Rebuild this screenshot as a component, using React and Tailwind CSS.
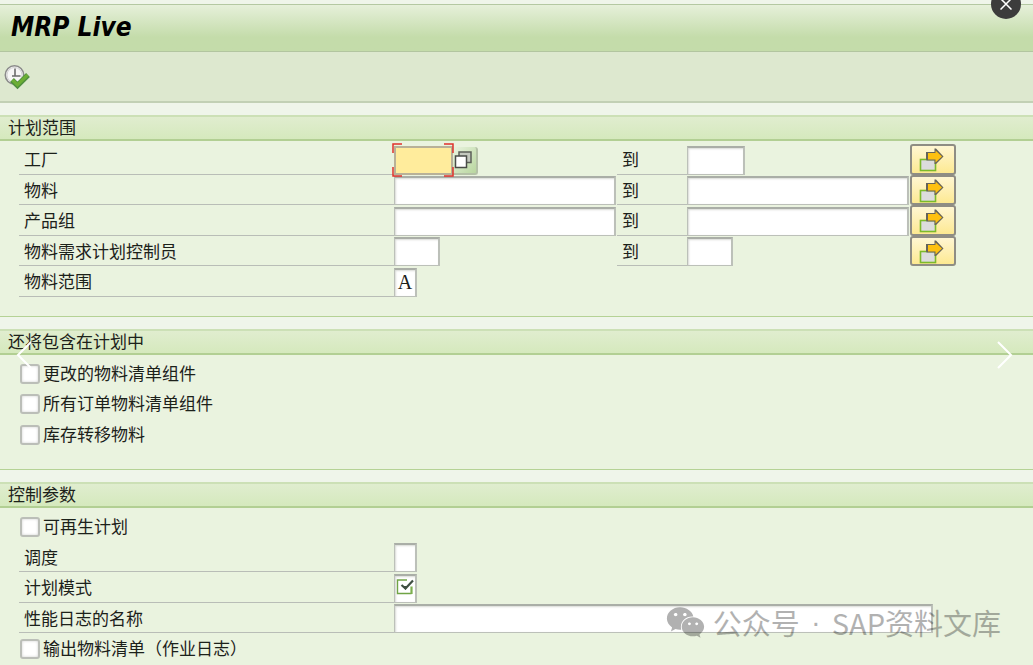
import { useState } from 'react';
import { FaWeixin } from 'react-icons/fa';

const ROW = 'flex h-[30px] items-end pl-[19px] odd:h-[31px]';
const FIELD =
    'h-[29px] border border-t-2 border-r-2 border-[#bcc0b9] border-t-[#aaaea7] bg-white shadow-[inset_1px_1px_2px_#d8dad6] outline-none';

const rangeRows = [
    { id: 'plant', label: '工厂', kind: 'plant' },
    { id: 'material', label: '物料', width: 'w-[222px]' },
    { id: 'group', label: '产品组', width: 'w-[222px]' },
    { id: 'controller', label: '物料需求计划控制员', width: 'w-[46px]' },
];

const includeOptions = ['更改的物料清单组件', '所有订单物料清单组件', '库存转移物料'];

function ExecuteIcon() {
    return (
        <svg className="h-[26px] w-[26px]" viewBox="0 0 26 26" fill="none">
            <circle cx="10.5" cy="11" r="9.2" fill="#f7f7f7" stroke="#8a8a8a" strokeWidth="1.6" />
            <circle cx="10.5" cy="11" r="7.5" stroke="#d2d2d2" />
            <path d="M11 4.5v8M8 12h8.5" stroke="#6c6c6c" strokeWidth="1.6" />
            <path d="M8 16l5.500 5.500L24 11" stroke="#4f8f3f" strokeWidth="5.4" />
            <path d="M8.5 16l5 4.800L23.5 11" stroke="#6cae34" strokeWidth="3.2" />
        </svg>
    );
}

function MultiSelectIcon() {
    return (
        <svg className="h-[25px] w-[26px]" viewBox="0 0 26 25" fill="none">
            <rect x="1.5" y="11.5" width="15" height="11" fill="#dcdcdc" stroke="#7cba2a" strokeWidth="1.6" />
            <path d="M7 4h8.5V.5h1.500L24.500 8.500 17 16h-1.500v-3.500H7.500L7 11z" fill="#65635a" />
            <path d="M9 5h7.500V2.500L23 8.500l-6.500 6v-3H9z" fill="#fdc010" />
        </svg>
    );
}

function CopyIcon() {
    return (
        <svg className="h-[18px] w-[18px]" viewBox="0 0 18 18">
            <path d="M5 1h12v10.5h-12z" fill="#c3c8be" stroke="#5c5f58" strokeWidth="1.5" />
            <path d="M1.5 5h11v11.5h-11z" fill="#fff" stroke="#4a4c48" strokeWidth="1.5" />
        </svg>
    );
}

function CheckedBoxIcon() {
    return (
        <svg className="h-[18px] w-[18px]" viewBox="0 0 18 18" fill="none">
            <path d="M11 2h-9.5v13.5h14" stroke="#70a445" strokeWidth="1.4" />
            <path d="M15.5 8.5v7.5" stroke="#7db04f" strokeWidth="2.2" />
            <path d="M5.5 7l4 3.5L17 2.5" stroke="#3f4f42" strokeWidth="2.2" />
            <path d="M6.5 8h5l-2 4z" fill="#3f4f42" />
        </svg>
    );
}

function Section({ title, children }) {
    return (
        <section className="mb-3 border-b border-[#b5d295] bg-[#eaf3df] pb-[19px]">
            <h2 className="flex h-[26px] items-center border-t-2 border-b-2 border-t-[#cce0b6] border-b-[#b2cf93] bg-linear-to-b from-[#e0edcf] to-[#d5e9bd] pb-[3px] pl-2">
                {title}
            </h2>
            <div className="pt-[3px]">{children}</div>
        </section>
    );
}

function RowLabel({ htmlFor, children }) {
    return (
        <label htmlFor={htmlFor} className="flex h-full w-[375px] shrink-0 items-center border-b border-[#b9bdb7] pl-[5px]">
            {children}
        </label>
    );
}

function CheckRow({ label }) {
    return (
        <div className={ROW}>
            <label className="flex h-full items-center gap-[3px] pl-px">
                <input
                    type="checkbox"
                    className="h-5 w-5 appearance-none rounded-[3px] border-2 border-[#bbbeb8] bg-white shadow-[inset_0_0_3px_#d0d0d0] checked:bg-[#70a445]"
                />
                <span className="pb-[2px]">{label}</span>
            </label>
        </div>
    );
}

function RangeRow({ id, label, kind, width }) {
    return (
        <div className={ROW}>
            <RowLabel htmlFor={id}>{label}</RowLabel>
            <div className="flex w-[223px] shrink-0 items-end">
                {kind === 'plant' ? (
                    <>
                        <div className="relative">
                            <input
                                id={id}
                                className="block h-[29px] w-[59px] border-2 border-[#b8b198] bg-[#ffec9c] px-1 outline-none"
                            />
                            {/* focus corners */}
                            <svg className="pointer-events-none absolute -top-[3px] -left-[2px] h-[34px] w-[62px]" viewBox="0 0 62 34" fill="none">
                                <path d="M1 10V1h9M52 1h9v9M61 24v9h-9M10 33H1v-9" stroke="#e0322c" strokeWidth="1.5" />
                            </svg>
                        </div>
                        <button
                            type="button"
                            aria-label="搜索帮助"
                            className="flex h-[28px] w-[25px] items-center justify-center rounded-r-[3px] border-r-2 border-b-2 border-[#b4c1a6] bg-linear-to-br from-[#e9f3df] to-[#b9d69f] pr-1"
                        >
                            <CopyIcon />
                        </button>
                    </>
                ) : (
                    <input id={id} className={`${FIELD} ${width} px-1`} />
                )}
            </div>
            <label htmlFor={`${id}-to`} className="flex h-full w-[70px] shrink-0 items-center border-b border-[#b9bdb7] pl-[5px]">
                到
            </label>
            <div className="flex w-[223px] shrink-0 items-end">
                <input id={`${id}-to`} className={`${FIELD} px-1 ${kind === 'plant' ? 'w-[58px]' : width}`} />
            </div>
            <button
                type="button"
                aria-label="多项选择"
                className="flex h-full w-[46px] shrink-0 items-center justify-center rounded-[3px] border-2 border-[#8f8d84] bg-linear-to-b from-[#fff6d2] to-[#fde991] pt-[2px] pr-[2px]"
            >
                <MultiSelectIcon />
            </button>
        </div>
    );
}

export default function App() {
    const [scope, setScope] = useState('A');

    return (
        <div className="relative min-h-screen overflow-hidden bg-[#eff5ea] pt-1 font-['Noto_Sans_CJK_SC',sans-serif] text-[17px] leading-6 text-[#1c211a]">
            <header className="flex h-12 items-center border-t border-b border-t-[#b4c8a2] border-b-[#b2c5a0] bg-linear-to-b from-[#e6f0da] to-[#c4dcaa] to-70% pb-[3px] pl-[11px]">
                <h1 className="font-['DejaVu_Sans_Condensed','DejaVu_Sans',sans-serif] text-[26px] font-bold text-black italic">
                    MRP Live
                </h1>
            </header>
            <div className="mb-3 flex h-[51px] items-center border-b-2 border-[#c2d0b5] bg-[#dde8cf] pl-1">
                <button type="button" aria-label="执行">
                    <ExecuteIcon />
                </button>
            </div>

            <main>
                <Section title="计划范围">
                    {rangeRows.map((row) => (
                        <RangeRow key={row.id} {...row} />
                    ))}
                    <div className={ROW}>
                        <RowLabel htmlFor="scope">物料范围</RowLabel>
                        <input
                            id="scope"
                            value={scope}
                            onChange={(e) => setScope(e.target.value)}
                            className={`${FIELD} w-[23px] pb-[2px] text-center font-['Liberation_Serif',serif] text-xl`}
                        />
                    </div>
                </Section>

                <Section title="还将包含在计划中">
                    {includeOptions.map((label) => (
                        <CheckRow key={label} label={label} />
                    ))}
                </Section>

                <Section title="控制参数">
                    <CheckRow label="可再生计划" />
                    <div className={ROW}>
                        <RowLabel htmlFor="scheduling">调度</RowLabel>
                        <input id="scheduling" className={`${FIELD} w-[23px]`} />
                    </div>
                    <div className={ROW}>
                        <RowLabel htmlFor="mode">计划模式</RowLabel>
                        <button id="mode" type="button" className={`${FIELD} flex w-[23px] items-center justify-center pb-1`}>
                            <span className="shrink-0">
                                <CheckedBoxIcon />
                            </span>
                        </button>
                    </div>
                    <div className={ROW}>
                        <RowLabel htmlFor="log-name">性能日志的名称</RowLabel>
                        <input id="log-name" className={`${FIELD} w-[539px] px-1`} />
                    </div>
                    <CheckRow label="输出物料清单（作业日志）" />
                </Section>
            </main>

            {/* viewer overlay */}
            <button
                type="button"
                aria-label="关闭"
                className="absolute -top-[11px] right-3 flex h-[30px] w-[30px] items-center justify-center rounded-full bg-[#3c3c3c]"
            >
                <svg className="h-3 w-3" viewBox="0 0 12 12" stroke="#fff" strokeWidth="1.5">
                    <path d="M.5.5l11 11M11.5.5l-11 11" />
                </svg>
            </button>
            <button type="button" aria-label="上一张" className="absolute top-[341px] left-4">
                <svg className="h-7 w-4" viewBox="0 0 16 28" fill="none" stroke="#fff" strokeWidth="2">
                    <path d="M15 1L2 14l13 13" />
                </svg>
            </button>
            <button type="button" aria-label="下一张" className="absolute top-[341px] right-5">
                <svg className="h-7 w-4" viewBox="0 0 16 28" fill="none" stroke="#fff" strokeWidth="2">
                    <path d="M1 1l13 13L1 27" />
                </svg>
            </button>
            <div className="pointer-events-none absolute top-[602px] right-8 flex items-center text-[29px] leading-10 text-black opacity-30">
                <FaWeixin className="mr-2 h-[39px] w-[39px]" />
                <span>公众号</span>
                <span className="w-8 text-center font-['Liberation_Sans',sans-serif]">·</span>
                <span>SAP资料文库</span>
            </div>
        </div>
    );
}
